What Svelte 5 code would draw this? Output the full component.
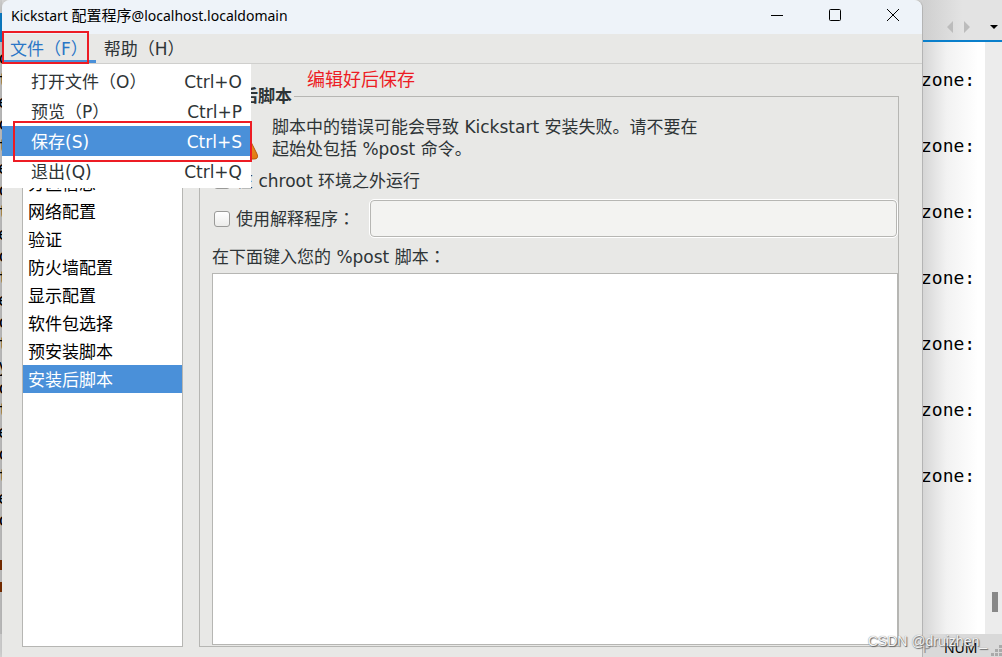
<script lang="ts">
	const menuItems = [
		{ label: '打开文件（O）', keys: 'Ctrl+O' },
		{ label: '预览（P）', keys: 'Ctrl+P' },
		{ label: '保存(S)', keys: 'Ctrl+S' },
		{ label: '退出(Q)', keys: 'Ctrl+Q' }
	];

	const sections = [
		'基本配置',
		'安装方法',
		'引导装载程序',
		'分区信息',
		'网络配置',
		'验证',
		'防火墙配置',
		'显示配置',
		'软件包选择',
		'预安装脚本',
		'安装后脚本'
	];

	// first letter of each terminal line, '#' is a prompt block
	const lines = [...'ctectectectectyctectec ##'];

	let selectedItem = $state(2);
	let selectedSection = $state('安装后脚本');
	let menuOpen = $state(true);
	let noChroot = $state(false);
	let useInterpreter = $state(false);
	let interpreter = $state('');
	let script = $state('');
</script>

<div class="desktop">
	<div class="terminal left" aria-hidden="true">
		<div class="toolbar"></div>
		<div class="output">
			{#each lines as line}
				<div class="line" class:block={line === '#'}>{line === '#' ? '' : line}</div>
			{/each}
		</div>
		<div class="status"></div>
	</div>

	<div class="window">
		<header class="titlebar">
			<span class="title">Kickstart <span class="cjk">配置程序</span>@localhost.localdomain</span>
			<button aria-label="最小化">
				<svg width="14" height="14"><path d="M1 7.5h12" /></svg>
			</button>
			<button aria-label="最大化">
				<svg width="14" height="14"><rect x="1.5" y="1.5" width="11" height="11" rx="1" /></svg>
			</button>
			<button aria-label="关闭">
				<svg width="14" height="14"><path d="M1 1l12 12M13 1L1 13" /></svg>
			</button>
		</header>

		<nav class="menubar">
			<div class="menu-root">
				<button class="menu-title" class:open={menuOpen} onclick={() => (menuOpen = !menuOpen)}>
					文件（F）
				</button>
				<span class="mark title-mark"></span>
				{#if menuOpen}
					<div class="menu">
						{#each menuItems as item, i}
							<button
								class="menu-item"
								class:selected={i === selectedItem}
								onmouseenter={() => (selectedItem = i)}
							>
								<span>{item.label}</span>
								<span>{item.keys}</span>
							</button>
						{/each}
						<span class="mark item-mark"></span>
					</div>
				{/if}
			</div>
			<button class="menu-title">帮助（H）</button>
		</nav>

		<div class="body">
			<p class="note">编辑好后保存</p>

			<div class="sections">
				{#each sections as section}
					<button
						class="section"
						class:selected={section === selectedSection}
						onclick={() => (selectedSection = section)}
					>
						{section}
					</button>
				{/each}
			</div>

			<fieldset>
				<legend>安装后脚本</legend>
				<div class="warning">
					<svg width="48" height="48" viewBox="0 0 48 48">
						<defs>
							<linearGradient id="warn" x1="0" y1="0" x2="0" y2="1">
								<stop offset="0" stop-color="#fcaf3e" />
								<stop offset="1" stop-color="#e07a10" />
							</linearGradient>
						</defs>
						<path
							d="M21 4q3-4 6 0l18 36q2 5-3 5H6q-5 0-3-5z"
							fill="url(#warn)"
							stroke="#b85a0a"
						/>
						<path d="M22 15h4l-1 15h-2z" fill="#fff" />
						<circle cx="24" cy="36" r="3" fill="#fff" />
					</svg>
					<p>脚本中的错误可能会导致 Kickstart 安装失败。请不要在<br />起始处包括 %post 命令。</p>
				</div>
				<label class="check chroot">
					<input type="checkbox" bind:checked={noChroot} />
					在 chroot 环境之外运行
				</label>
				<div class="interpreter">
					<label class="check">
						<input type="checkbox" bind:checked={useInterpreter} />
						<span>使用解释程序<span class="colon">：</span></span>
					</label>
					<input
						class="entry"
						type="text"
						aria-label="解释程序"
						disabled={!useInterpreter}
						bind:value={interpreter}
					/>
				</div>
				<label class="script-label" for="script">
					在下面键入您的 %post 脚本<span class="colon">：</span>
				</label>
				<textarea id="script" bind:value={script}></textarea>
			</fieldset>
		</div>
	</div>

	<div class="terminal right">
		<div class="toolbar">
			<svg width="56" height="12">
				<path d="M7 0v12L1 6zM18 0v12l6-6z" fill="#bcbcbc" />
				<path d="M44 4h8l-4 4z" fill="#000" />
			</svg>
		</div>
		<div class="screen">
			<div class="output">
				{#each lines as line}
					<div class="line">{line === 't' ? 'zone:' : ''}</div>
				{/each}
			</div>
			<div class="scroll"><div class="thumb"></div></div>
		</div>
		<div class="status">
			<span class="cap">P</span>
			<span>NUM</span>
			<svg width="12" height="12" fill="#aaa">
				<path d="M9 0h3v3H9zM5 4h3v3H5zM9 4h3v3H9zM1 8h3v3H1zM5 8h3v3H5zM9 8h3v3H9z" />
			</svg>
		</div>
	</div>

	<div class="watermark">CSDN @druizhen_</div>
</div>

<style>
	:global(body) {
		margin: 0;
	}

	.desktop {
		position: relative;
		display: grid;
		grid-template-columns: 2px minmax(0, 1fr) 79px;
		min-height: 100vh;
		background: #dcdcdc;
		font-family: 'DejaVu Sans', 'Noto Sans CJK SC', sans-serif;
		font-size: 17px;
		line-height: 22px;
		color: #2e3436;
	}

	button {
		border: none;
		background: none;
		padding: 0;
		font: inherit;
		color: inherit;
		text-align: left;
		white-space: nowrap;
	}

	p {
		margin: 0;
	}

	/* terminal behind the window */
	.terminal {
		display: flex;
		flex-direction: column;
		overflow: hidden;
		color: #000;
	}

	.toolbar {
		box-sizing: border-box;
		height: 42px;
		border-bottom: 2px solid #0a7fcb;
		background: linear-gradient(to right, #cfcfcf, #e3e3e3 50%);
		flex: none;
	}

	.left .toolbar {
		background: linear-gradient(#cfcfcf 13px, #0a7fcb 13px);
	}

	.right .toolbar {
		display: flex;
		justify-content: flex-end;
		align-items: flex-end;
		padding-bottom: 7px;
	}

	.output {
		flex: 1;
		padding-top: 5px;
		font-family: 'DejaVu Sans Mono', monospace;
		font-size: 18px;
		overflow: hidden;
	}

	.left .output {
		background: #c4c4c4;
	}

	.line {
		height: 22px;
		margin-left: -2px;
	}

	.block {
		background: linear-gradient(#7b2e00, #7b2e00) 0 7px / 100% 10px no-repeat;
	}

	.screen {
		flex: 1;
		display: flex;
		background: linear-gradient(to right, #d6d6d6, #f2f2f2 30%, #ffffff 70%);
	}

	.scroll {
		width: 17px;
		display: flex;
		align-items: flex-end;
		background: #ececec;
	}

	.thumb {
		width: 6px;
		height: 20px;
		margin: 0 4px 22px 7px;
		background: #888;
	}

	.status {
		height: 23px;
		display: flex;
		align-items: flex-end;
		justify-content: space-between;
		background: #d9d9d9;
		font-family: 'Noto Sans', sans-serif;
		font-size: 14px;
		line-height: 18px;
	}

	.cap {
		color: #999;
	}

	/* window */
	.window {
		display: flex;
		flex-direction: column;
		border-right: 1px solid #b4b4b4;
		border-radius: 8px 8px 0 0;
		background: #e8e8e6;
		box-shadow: 0 0 8px rgba(0, 0, 0, 0.2);
	}

	.titlebar {
		display: flex;
		height: 34px;
		border-radius: 8px 8px 0 0;
		background: #eef3f9;
		color: #000;
		font-family: 'Noto Sans', 'Noto Sans CJK SC', sans-serif;
		font-size: 14px;
	}

	.title {
		flex: 1;
		padding: 4px 9px;
	}

	.cjk {
		font-size: 15px;
	}

	.titlebar button {
		width: 58px;
		display: flex;
		align-items: center;
		justify-content: center;
		padding-bottom: 4px;
	}

	.titlebar svg {
		fill: none;
		stroke: #000;
	}

	.menubar {
		display: flex;
		height: 29px;
		border-bottom: 1px solid #cfcfcd;
	}

	.menu-root {
		position: relative;
		display: flex;
	}

	.menu-title {
		padding: 4px 8px 0;
		border-bottom: 3px solid transparent;
	}

	.menu-title.open {
		color: #2a76c6;
		border-bottom-color: #4a90d9;
	}

	.menu {
		position: absolute;
		top: 30px;
		left: 0;
		z-index: 2;
		width: 249px;
		padding: 2px 0;
		background: #fff;
	}

	.menu-item {
		display: flex;
		justify-content: space-between;
		align-items: center;
		width: 100%;
		height: 30px;
		padding: 2px 9px 0 29px;
	}

	.selected {
		background: #4a90d9;
		color: #fff;
	}

	.mark {
		position: absolute;
		z-index: 3;
		box-sizing: border-box;
		border: 2px solid #ed1c24;
		pointer-events: none;
	}

	.title-mark {
		inset: -3px 7px -1px 0;
	}

	.item-mark {
		inset: 57px -1px 26px 11px;
	}

	.body {
		position: relative;
		flex: 1;
		display: flex;
		gap: 16px;
		padding: 20px 23px 10px 20px;
	}

	.note {
		position: absolute;
		top: 3px;
		left: 305px;
		color: #ed1c24;
		font-family: 'Noto Sans CJK SC', sans-serif;
		font-size: 18px;
	}

	.sections {
		box-sizing: border-box;
		width: 161px;
		flex: none;
		border: 1px solid #b6b6b3;
		background: #fff;
		color: #000;
	}

	.section {
		display: block;
		width: 100%;
		height: 28px;
		padding: 2px 5px 0;
	}

	.section.selected {
		color: #fff;
	}

	fieldset {
		flex: 1;
		min-width: 0;
		display: flex;
		flex-direction: column;
		margin: 0;
		border: 1px solid #b6b6b3;
		padding: 0 0 1px 12px;
	}

	legend {
		margin-left: -5px;
		padding: 0 2px 0 0;
		font-weight: bold;
		line-height: 24px;
	}

	.warning {
		display: flex;
		align-items: center;
		gap: 12px;
		margin-top: 6px;
	}

	.check {
		display: flex;
		align-items: center;
		gap: 6px;
		padding-left: 2px;
		white-space: nowrap;
	}

	.check input {
		appearance: none;
		width: 16px;
		height: 16px;
		margin: 0;
		border: 1px solid #9a9a98;
		border-radius: 3px;
		background: linear-gradient(#fff, #ececea);
	}

	.check input:checked {
		background: #4a90d9;
	}

	/* the full-width colon sits in the middle of its cell */
	.colon {
		font-family: 'Noto Sans CJK TC', sans-serif;
	}

	.chroot {
		margin: 8px 0;
	}

	.interpreter {
		display: flex;
		align-items: center;
		gap: 14px;
	}

	.entry {
		flex: 1;
		min-width: 0;
		box-sizing: border-box;
		height: 37px;
		margin: 0 1px;
		border: 1px solid #b6b6b3;
		border-radius: 4px;
		outline: 1px solid #fff;
		background: #f3f3f1;
		font: inherit;
	}

	.script-label {
		margin: 8px 0 5px;
	}

	textarea {
		flex: 1;
		border: 1px solid #b6b6b3;
		padding: 4px;
		background: #fff;
		font: inherit;
		resize: none;
		outline: none;
	}

	.watermark {
		position: absolute;
		right: 15px;
		bottom: 5px;
		z-index: 4;
		color: #f4f4f4;
		font-family: 'Liberation Sans', sans-serif;
		font-size: 14px;
		text-shadow: 1px 1px 1px #666, 0 0 1px #777;
	}
</style>
